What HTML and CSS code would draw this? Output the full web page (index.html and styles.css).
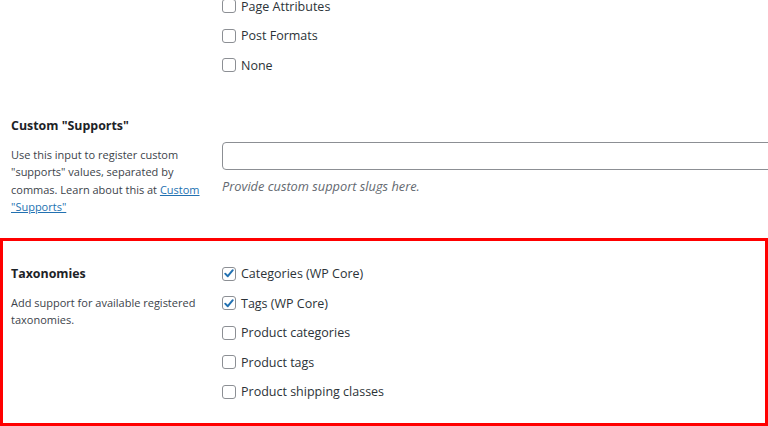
FILE: index.html
```html
<!DOCTYPE html>
<html lang="en">
<head>
<meta charset="utf-8">
<title>Post Type Settings</title>
<link rel="stylesheet" href="styles.css">
</head>
<body>
<div class="page">
  <section class="row row-supports">
    <div class="row-label"></div>
    <div class="row-field">
      <ul class="checks">
        <li class="check"><span class="box"></span><span>Page Attributes</span></li>
        <li class="check"><span class="box"></span><span>Post Formats</span></li>
        <li class="check"><span class="box"></span><span>None</span></li>
      </ul>
    </div>
  </section>

  <section class="row row-custom">
    <div class="row-label">
      <h3 class="title">Custom "Supports"</h3>
      <p class="desc">Use this input to register custom "supports" values, separated by commas. Learn about this at <a href="#">Custom "Supports"</a></p>
    </div>
    <div class="row-field field-input">
      <div class="input"></div>
      <p class="hint">Provide custom support slugs here.</p>
    </div>
  </section>

  <section class="row row-tax">
    <div class="row-label">
      <h3 class="title">Taxonomies</h3>
      <p class="desc">Add support for available registered taxonomies.</p>
    </div>
    <div class="row-field">
      <ul class="checks">
        <li class="check"><span class="box checked"><svg viewBox="0 0 14 14"><path d="M2.6 7.2 L5.6 10.2 L11.4 3.2" fill="none" stroke="#2271b1" stroke-width="2.3" stroke-linecap="round" stroke-linejoin="round"/></svg></span><span>Categories (WP Core)</span></li>
        <li class="check"><span class="box checked"><svg viewBox="0 0 14 14"><path d="M2.6 7.2 L5.6 10.2 L11.4 3.2" fill="none" stroke="#2271b1" stroke-width="2.3" stroke-linecap="round" stroke-linejoin="round"/></svg></span><span>Tags (WP Core)</span></li>
        <li class="check"><span class="box"></span><span>Product categories</span></li>
        <li class="check"><span class="box"></span><span>Product tags</span></li>
        <li class="check"><span class="box"></span><span>Product shipping classes</span></li>
      </ul>
    </div>
  </section>
</div>
</body>
</html>
```

FILE: styles.css
```css
* { box-sizing: border-box; }

html, body {
  margin: 0;
  padding: 0;
  background: #ffffff;
  overflow: hidden;
}

body {
  width: 768px;
  height: 426px;
  font-family: "Open Sans", "Noto Sans", sans-serif;
  color: #3c434a;
}

.page {
  margin-top: -3px;
}

.row {
  display: grid;
  grid-template-columns: 200px 1fr;
  column-gap: 11px;
  padding-left: 11px;
}

.checks {
  list-style: none;
  margin: 0;
  padding: 0;
  display: flex;
  flex-direction: column;
  gap: 11.5px;
}

.check {
  display: flex;
  align-items: center;
  gap: 5px;
  height: 18px;
  font-size: 12.5px;
  color: #2c3338;
}

.box {
  flex: none;
  width: 14px;
  height: 14px;
  border: 1px solid #8c8f94;
  border-radius: 3px;
  background: #fff;
  display: flex;
  align-items: center;
  justify-content: center;
}

.box svg {
  display: block;
  width: 13px;
  height: 13px;
}

.title {
  margin: 0;
  font-size: 12.4px;
  line-height: 18px;
  font-weight: 700;
  color: #1d2327;
}

.desc {
  margin: 11px 0 0;
  font-size: 11px;
  line-height: 17.4px;
  color: #3c434a;
}

.desc a {
  color: #2271b1;
  text-decoration: underline;
}

.row-custom {
  margin-top: 43px;
}

.field-input {
  padding-top: 25px;
  min-width: 0;
}

.input {
  width: 600px;
  height: 28px;
  border: 1px solid #8c8f94;
  border-radius: 4px;
  background: #fff;
}

.hint {
  margin: 8px 0 0;
  font-size: 12.8px;
  line-height: 17.4px;
  font-style: italic;
  color: #646970;
}

.row-tax {
  margin-top: 22px;
  height: 188px;
  border: 3px solid #ff0000;
  padding: 24px 0 0 8px;
  width: 768px;
}
```
